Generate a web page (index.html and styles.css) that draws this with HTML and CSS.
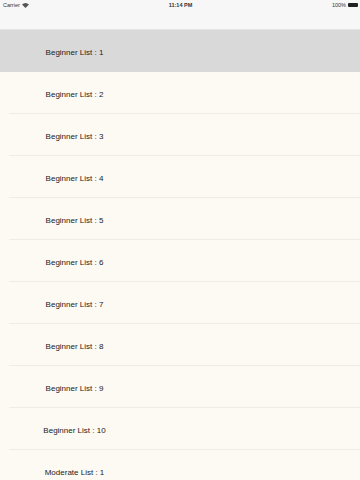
FILE: index.html
```html
<!DOCTYPE html>
<html>
<head>
    <meta charset="utf-8">
    <title>Lists</title>
    <meta name="viewport" content="width=device-width, initial-scale=1.0">
    <link rel="stylesheet" href="styles.css">
</head>
<body>

    <!-- status bar -->
    <div class="status">
        <span class="carrier">Carrier
            <svg class="wifi" width="7" height="5" viewBox="0 0 14 10">
                <path d="M7 10 L0 3 Q7 -3 14 3 Z" fill="#555"/>
            </svg>
        </span>
        <span class="clock">11:14 PM</span>
        <span class="battery">100% <span class="cell"></span></span>
    </div>

    <!-- navigation bar -->
    <div class="navbar"></div>

    <!-- list -->
    <div class="list">
        <div class="row selected"><span class="label">Beginner List : 1</span></div>
        <div class="row"><span class="label">Beginner List : 2</span></div>
        <div class="row"><span class="label">Beginner List : 3</span></div>
        <div class="row"><span class="label">Beginner List : 4</span></div>
        <div class="row"><span class="label">Beginner List : 5</span></div>
        <div class="row"><span class="label">Beginner List : 6</span></div>
        <div class="row"><span class="label">Beginner List : 7</span></div>
        <div class="row"><span class="label">Beginner List : 8</span></div>
        <div class="row"><span class="label">Beginner List : 9</span></div>
        <div class="row"><span class="label">Beginner List : 10</span></div>
        <div class="row"><span class="label">Moderate List : 1</span></div>
    </div>

</body>
</html>
```

FILE: styles.css
```css
/* GLOBAL */
body    {   margin: 0;
            background-color: #fdf9f3;
            font-family: "Liberation Sans", Arial, sans-serif;
            color: #222;
            overflow: hidden;
        }

/* STATUS BAR */
.status     {   height: 10px;
                background-color: #f7f7f7;
                display: flex;
                justify-content: space-between;
                align-items: center;
                padding: 0 2px 0 3px;
                font-size: 5.5px;
                color: #333;
            }
.carrier    { flex: 1; display: flex; align-items: center; gap: 2px; }
.clock      { flex: 1; text-align: center; font-weight: bold; }
.battery    { flex: 1; display: flex; justify-content: flex-end; align-items: center; gap: 2px; }
.cell       { width: 10px; height: 4px; background-color: #222; border-radius: 1px; }

/* NAV BAR */
.navbar     {   height: 19px;
                background-color: #f7f7f7;
                border-bottom: 1px solid #e4e4e4;
            }

/* LIST ROWS */
.row        {   height: 42px;
                box-sizing: border-box;
                padding-top: 2px;
                display: flex;
                align-items: center;
                position: relative;
                font-size: 8px;
            }
.row::after {   content: "";
                position: absolute;
                left: 9px; right: 0; bottom: 0;
                height: 1px;
                background-color: #efebe5;
            }
.row.selected           { background-color: #d9d9d9; }
.row.selected::after    { display: none; }

.label      {   width: 149px;
                text-align: center;
            }
```
